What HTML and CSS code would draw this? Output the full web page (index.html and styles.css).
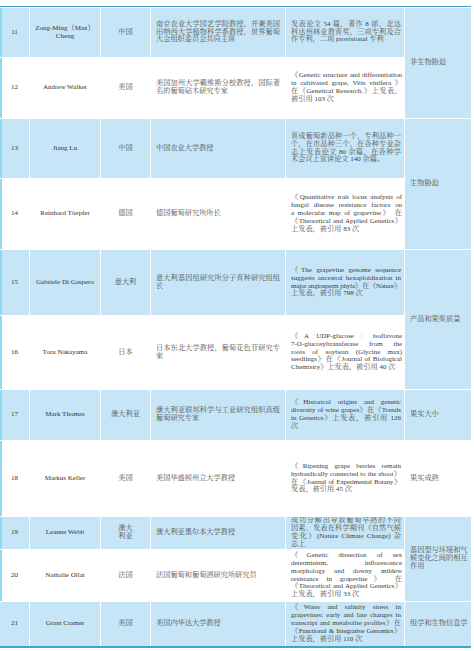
FILE: index.html
```html
<!DOCTYPE html>
<html lang="zh">
<head>
<meta charset="utf-8">
<title>葡萄研究专家</title>
<link rel="stylesheet" href="styles.css">
</head>
<body>
<div class="sheet">
<table class="grid">
<colgroup>
<col class="c-no"><col class="c-name"><col class="c-country"><col class="c-desc"><col class="c-work"><col class="c-field">
</colgroup>
<tbody>
<tr class="r11 blue">
<td class="no edge">11</td>
<td class="name">Zong-Ming<span class="zh">（</span>Max<span class="zh">）</span><br>Cheng</td>
<td class="country">中国</td>
<td class="desc">南京农业大学园艺学院教授，并兼美国田纳西大学植物科学系教授，世界葡萄大会组织委员会共同主席</td>
<td class="work"><span class="ln">发表论文 <span class="en">54</span> 篇，著作 <span class="en">8</span> 部，北达</span><span class="ln">科达州林业教育奖，三项专利及合</span><span class="end">作专利，二项 <span class="en">provisional</span> 专利</span></td>
<td class="field fblue" rowspan="2">非生物胁迫</td>
</tr>
<tr class="r12">
<td class="no edge">12</td>
<td class="name">Andrew Walker</td>
<td class="country">美国</td>
<td class="desc">美国加州大学戴维斯分校教授，国际著名的葡萄砧木研究专家</td>
<td class="work"><span class="ln">《<span class="en">Genetic structure and differentiation</span></span><span class="ln"><span class="en">in cultivated grape, Vitis vinifera </span>》</span><span class="ln">在《<span class="en">Genetical Research.</span>》上发表，</span><span class="end">被引用 <span class="en">103</span> 次</span></td>
</tr>
<tr class="r13 blue">
<td class="no edge">13</td>
<td class="name">Jiang Lu</td>
<td class="country">中国</td>
<td class="desc">中国农业大学教授</td>
<td class="work"><span class="ln">育成葡萄新品种一个，专利品种一</span><span class="ln">个，在市品种三个，在各种专业杂</span><span class="ln">志上发表论文 <span class="en">80</span> 余篇，在各种学</span><span class="end">术会议上宣读论文 <span class="en">140</span> 余篇。</span></td>
<td class="field fblue" rowspan="2">生物胁迫</td>
</tr>
<tr class="r14">
<td class="no edge">14</td>
<td class="name">Reinhard Töepfer</td>
<td class="country">德国</td>
<td class="desc">德国葡萄研究所所长</td>
<td class="work"><span class="ln">《<span class="en">Quantitative trait locus analysis of</span></span><span class="ln"><span class="en">fungal disease resistance factors on</span></span><span class="ln"><span class="en">a molecular map of grapevine</span>》 在</span><span class="ln">《<span class="en">Theoretical and Applied Genetics</span>》</span><span class="end">上发表，被引用 <span class="en">83</span> 次</span></td>
</tr>
<tr class="r15 blue">
<td class="no edge">15</td>
<td class="name">Gabriele Di Gaspero</td>
<td class="country">意大利</td>
<td class="desc">意大利基因组研究所分子育种研究组组长</td>
<td class="work"><span class="ln">《<span class="en">The grapevine genome sequence</span></span><span class="ln"><span class="en">suggests ancestral hexaploidization in</span></span><span class="ln tight"><span class="en">major angiosperm phyla</span>》在《<span class="en">Nature</span>》</span><span class="end">上发表，被引用 <span class="en">798</span> 次</span></td>
<td class="field fblue" rowspan="2">产品和果浆质量</td>
</tr>
<tr class="r16">
<td class="no edge">16</td>
<td class="name">Toru Nakayama</td>
<td class="country">日本</td>
<td class="desc">日本东北大学教授，葡萄花色苷研究专家</td>
<td class="work"><span class="ln">《<span class="en">A UDP-glucose</span>：<span class="en">isoflavone</span></span><span class="ln"><span class="en">7-O-glucosyltransferase from the</span></span><span class="ln"><span class="en">roots of soybean (Glycine max)</span></span><span class="ln"><span class="en">seedlings</span>》在《<span class="en">Journal of Biological</span></span><span class="end"><span class="en">Chemistry</span>》上发表，被引用 <span class="en">40</span> 次</span></td>
</tr>
<tr class="r17 blue">
<td class="no edge">17</td>
<td class="name">Mark Thomas</td>
<td class="country">澳大利亚</td>
<td class="desc">澳大利亚联邦科学与工业研究组织高级葡萄研究专家</td>
<td class="work"><span class="ln">《<span class="en">Historical origins and genetic</span></span><span class="ln"><span class="en">diversity of wine grapes</span>》在《<span class="en">Trends</span></span><span class="ln"><span class="en">in Genetics</span>》上发表，被引用 <span class="en">126</span></span><span class="end">次</span></td>
<td class="field fblue">果实大小</td>
</tr>
<tr class="r18">
<td class="no edge">18</td>
<td class="name">Markus Keller</td>
<td class="country">美国</td>
<td class="desc">美国华盛顿州立大学教授</td>
<td class="work"><span class="ln">《<span class="en">Ripening grape berries remain</span></span><span class="ln"><span class="en">hydraulically connected to the shoot</span>》</span><span class="ln tight">在《<span class="en">Journal of Experimental Botany</span>》</span><span class="end">发表，被引用 <span class="en">45</span> 次</span></td>
<td class="field">果实成熟</td>
</tr>
<tr class="r19 blue">
<td class="no edge">19</td>
<td class="name">Leanne Webb</td>
<td class="country">澳大<br>利亚</td>
<td class="desc">澳大利亚墨尔本大学教授</td>
<td class="work"><span class="ln">成功分解出导致葡萄早熟的不同</span><span class="ln">因素，发表在科学期刊《自然气候</span><span class="ln">变化》<span class="en">(Nature Climate Change)</span> 杂</span><span class="end">志上</span></td>
<td class="field fblue" rowspan="2">基因型与环境和气候变化之间的相互作用</td>
</tr>
<tr class="r20">
<td class="no edge">20</td>
<td class="name">Nathalie Ollat</td>
<td class="country">法国</td>
<td class="desc">法国葡萄和葡萄酒研究所研究员</td>
<td class="work"><span class="ln">《<span class="en">Genetic dissection of sex</span></span><span class="ln"><span class="en">determinism, inflorescence</span></span><span class="ln"><span class="en">morphology and downy mildew</span></span><span class="ln"><span class="en">resistance in grapevine</span>》 在</span><span class="ln">《<span class="en">Theoretical and Applied Genetics</span>》</span><span class="end">上发表，被引用 <span class="en">33</span> 次</span></td>
</tr>
<tr class="r21 blue">
<td class="no">21</td>
<td class="name">Grant Cramer</td>
<td class="country">美国</td>
<td class="desc">美国内华达大学教授</td>
<td class="work"><span class="ln">《<span class="en">Water and salinity stress in</span></span><span class="ln"><span class="en">grapevines: early and late changes in</span></span><span class="ln"><span class="en">transcript and metabolite profiles</span>》在</span><span class="ln tight">《<span class="en">Functional &amp; Integrative Genomics</span>》</span><span class="end">上发表，被引用 <span class="en">110</span> 次</span></td>
<td class="field fblue">组学和生物信息学</td>
</tr>
</tbody>
</table>
</div>
</body>
</html>
```

FILE: styles.css
```css
html, body {
  margin: 0;
  padding: 0;
  background: #ffffff;
}

body {
  font-family: "Liberation Serif", "Noto Serif CJK SC", "Noto Sans CJK SC", serif;
  color: #505050;
}

.sheet {
  margin-top: 6px;
  width: 471px;
  border-top: 1px solid #3ea6c8;
  border-bottom: 2px solid #3ea6c8;
  padding-top: 1px;
}

.grid {
  width: 471px;
  table-layout: fixed;
  border-collapse: separate;
  border-spacing: 0;
}

.c-no { width: 30px; }
.c-name { width: 71px; }
.c-country { width: 50px; }
.c-desc { width: 135px; }
.c-work { width: 119px; }
.c-field { width: 66px; }

.grid td {
  padding: 0 5px;
  border-right: 1px solid #ffffff;
  border-bottom: 1px solid #ffffff;
  vertical-align: middle;
  font-size: 7.2px;
  line-height: 7.9px;
  overflow: hidden;
}

.grid td:last-child { border-right: 0; }
.grid .r21 td { border-bottom: 0; }

.grid .blue td { background: #c6e6f7; }
.grid .fblue { background: #c6e6f7; }

.grid .edge { box-shadow: inset 2px 0 0 #8fdaee; }

.grid .no,
.grid .name,
.grid .country {
  text-align: center;
  padding: 0 2px;
}

.grid .no,
.grid .name {
  font-size: 7px;
  color: #333333;
}

.grid .name .zh { font-size: 7.2px; }

.grid .desc { text-align: justify; }

.grid .work {
  padding: 0 3px 0 5px;
}

.ln,
.end {
  display: block;
  white-space: nowrap;
}

.ln {
  text-align: justify;
  text-align-last: justify;
}

.end { text-align: left; }

.tight { letter-spacing: -0.2px; }

.grid .field {
  padding: 0 1px 0 5px;
  text-align: left;
}

.en {
  font-size: 7px;
  color: #3c3c3c;
}

.r11 { height: 50px; }
.r12 { height: 61px; }
.r13 { height: 60px; }
.r14 { height: 71px; }
.r15 { height: 66px; }
.r16 { height: 74px; }
.r17 { height: 51px; }
.r18 { height: 76px; }
.r19 { height: 33px; }
.r20 { height: 52px; }
.r21 { height: 44px; }
```
